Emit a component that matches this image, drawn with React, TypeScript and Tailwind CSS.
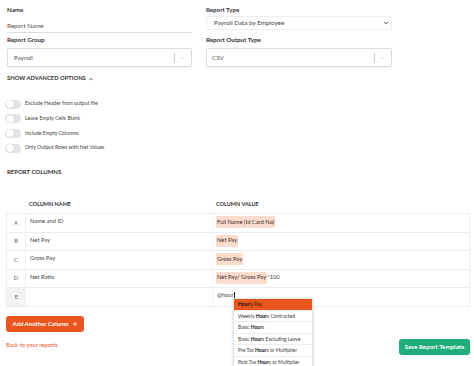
import { ChevronDown, ChevronUp, Plus } from 'lucide-react';

const toggles = [
    'Exclude Header from output file',
    'Leave Empty Cells Blank',
    'Include Empty Columns',
    'Only Output Rows with Net Values',
];

const rows = [
    { key: 'A', name: 'Name and ID', value: 'Full Name (Id Card No)', extra: '' },
    { key: 'B', name: 'Net Pay', value: 'Net Pay', extra: '' },
    { key: 'C', name: 'Gross Pay', value: 'Gross Pay', extra: '' },
    { key: 'D', name: 'Net Ratio', value: 'Net Pay/ Gross Pay', extra: '*100' },
];

// mention suggestions, middle part is the matched text
const suggestions = [
    ['', 'Hour', 'ly Pay'],
    ['Weekly ', 'Hour', 's Contracted'],
    ['Basic ', 'Hour', 's'],
    ['Basic ', 'Hour', 's Excluding Leave'],
    ['Pre Tax ', 'Hour', 's or Multiplier'],
    ['Post Tax ', 'Hour', 's or Multiplier'],
];

function Toggle({ label }: { label: string }) {
    return (
        <div className="flex items-center gap-[4px] h-[14.6px]">
            <div className="relative w-[16px] h-[9px] rounded-full bg-[#e4e4e4]">
                <span className="absolute left-[0.5px] top-[0.5px] w-[8px] h-[8px] rounded-full bg-white shadow-[0_0_1px_rgba(0,0,0,0.3)]" />
            </div>
            <span className="text-[5.2px] text-[#444]">{label}</span>
        </div>
    );
}

export default function App() {
    return (
        <div className="w-[474px] h-[366px] overflow-hidden bg-white relative font-['Lato',sans-serif] text-[#333]">
            {/* top form */}
            <div className="grid grid-cols-[185px_186px] gap-x-[14px] pl-[7px] pt-[5px]">
                <div className="flex flex-col">
                    <label className="text-[6.2px] font-bold h-[9px] leading-[9px]">Name</label>
                    <div className="mt-[6px] h-[13px] border-b-[1.5px] border-[#ddd] text-[6.3px] text-[#555] leading-[12px]">Report Name</div>
                    <label className="mt-[2px] text-[6.2px] font-bold h-[9px] leading-[9px]">Report Group</label>
                    <div className="mt-[4px] h-[19px] border border-[#ddd] rounded-[2px] flex items-center shadow-[0_1px_1px_rgba(0,0,0,0.04)]">
                        <span className="flex-1 pl-[6px] text-[6.3px] text-[#555]">Payroll</span>
                        <span className="w-px h-[10px] bg-[#ccc]" />
                        <span className="w-[16px] flex justify-center"><ChevronDown className="w-[6px] h-[6px] text-[#bbb]" /></span>
                    </div>
                </div>
                <div className="flex flex-col">
                    <label className="text-[6.2px] font-bold h-[9px] leading-[9px]">Report Type</label>
                    <div className="mt-[2px] h-[14px] border border-[#eee] rounded-[2px] flex items-center">
                        <span className="flex-1 pl-[7px] text-[6.3px] text-[#444]">Payroll Data by Employee</span>
                        <ChevronDown className="w-[6px] h-[6px] text-[#222] mr-[2px]" strokeWidth={3.5} />
                    </div>
                    <label className="mt-[5px] text-[6.2px] font-bold h-[9px] leading-[9px]">Report Output Type</label>
                    <div className="mt-[4px] h-[19px] border border-[#ddd] rounded-[2px] flex items-center shadow-[0_1px_1px_rgba(0,0,0,0.04)]">
                        <span className="flex-1 pl-[5px] text-[6.3px] text-[#555]">CSV</span>
                        <span className="w-px h-[10px] bg-[#ccc]" />
                        <span className="w-[16px] flex justify-center"><ChevronDown className="w-[6px] h-[6px] text-[#bbb]" /></span>
                    </div>
                </div>
            </div>

            {/* advanced options */}
            <div className="pl-[7px] mt-[7px] flex items-center gap-[2px] text-[5.8px] font-bold text-[#333] h-[9px]">
                SHOW ADVANCED OPTIONS
                <ChevronUp className="w-[6px] h-[6px]" strokeWidth={3} />
            </div>
            <div className="pl-[5px] mt-[14px] flex flex-col">
                {toggles.map(t => <Toggle key={t} label={t} />)}
            </div>

            <div className="pl-[7px] mt-[11.5px] text-[6px] font-bold text-[#333] h-[9px] leading-[9px]">REPORT COLUMNS</div>

            {/* table */}
            <div className="mx-[6px] w-[464px] mt-[24.5px]">
                <div className="flex h-[13px] items-start text-[5.5px] font-bold text-[#333] leading-[8px]">
                    <div className="w-[19px]" />
                    <div className="w-[187px] pl-[4px]">COLUMN NAME</div>
                    <div className="pl-[4px]">COLUMN VALUE</div>
                </div>
                <div className="border border-[#eee] shadow-[0_0_1px_rgba(0,0,0,0.06)]">
                    {rows.map(r => (
                        <div key={r.key} className="flex h-[18.5px] border-b border-[#ececec] text-[5.8px] text-[#444]">
                            <div className="w-[19px] border-r border-[#f0f0f0] flex items-center justify-center text-[#666]">{r.key}</div>
                            <div className="w-[187px] border-r border-[#f3f3f3] pl-[4px] pt-[3px]">{r.name}</div>
                            <div className="flex-1 pl-[3px] pt-[2px] flex items-start">
                                <span className="bg-[#fcdccf] px-[1px] py-[1.5px] rounded-[1px] text-[#3a2a24]">{r.value}</span>
                                {r.extra && <span className="py-[1.5px]">{r.extra}</span>}
                            </div>
                        </div>
                    ))}
                    <div className="flex h-[17.5px] text-[5.8px] text-[#444]">
                        <div className="w-[19px] bg-[#f3f3f3] flex items-center justify-center text-[#666]">E</div>
                        <div className="w-[187px] border-r border-[#f3f3f3]" />
                        <div className="flex-1 pl-[4px] pt-[3px] relative">
                            <span>@hour</span>
                            <span className="inline-block w-[0.7px] h-[7px] bg-[#222] align-middle" />
                            {/* mention dropdown */}
                            <div className="absolute left-[20px] top-[10px] w-[80px] bg-white border border-[#e2e2e2] shadow-[0_1px_3px_rgba(0,0,0,0.15)] z-10">
                                {suggestions.map((s, i) => (
                                    <div
                                        key={i}
                                        className={`h-[11.5px] leading-[11px] pl-[4px] text-[5px] border-b border-[#ececec] whitespace-nowrap ${i === 0 ? 'bg-[#e8551d] text-[#3b1407]' : 'text-[#444]'}`}
                                    >
                                        {s[0]}<b className="font-bold text-[5px] text-[#111]">{s[1]}</b>{s[2]}
                                    </div>
                                ))}
                            </div>
                        </div>
                    </div>
                </div>
            </div>

            {/* bottom actions */}
            <div className="pl-[6px] pr-[4px] mt-[9px]">
                <button className="h-[16px] w-[78px] rounded-[3px] bg-[#e8551d] text-white text-[6px] font-bold flex items-center justify-center gap-[3px]">
                    Add Another Column
                    <Plus className="w-[6px] h-[6px]" strokeWidth={3} />
                </button>
                <div className="mt-[7px] flex justify-between items-start">
                    <a className="pt-[2px] text-[5.8px] text-[#e8551d]">Back to your reports</a>
                    <button className="h-[16px] w-[71px] rounded-[3px] bg-[#1fae7b] text-white text-[6.2px] font-bold flex items-center justify-center">
                        Save Report Template
                    </button>
                </div>
            </div>
        </div>
    );
}
